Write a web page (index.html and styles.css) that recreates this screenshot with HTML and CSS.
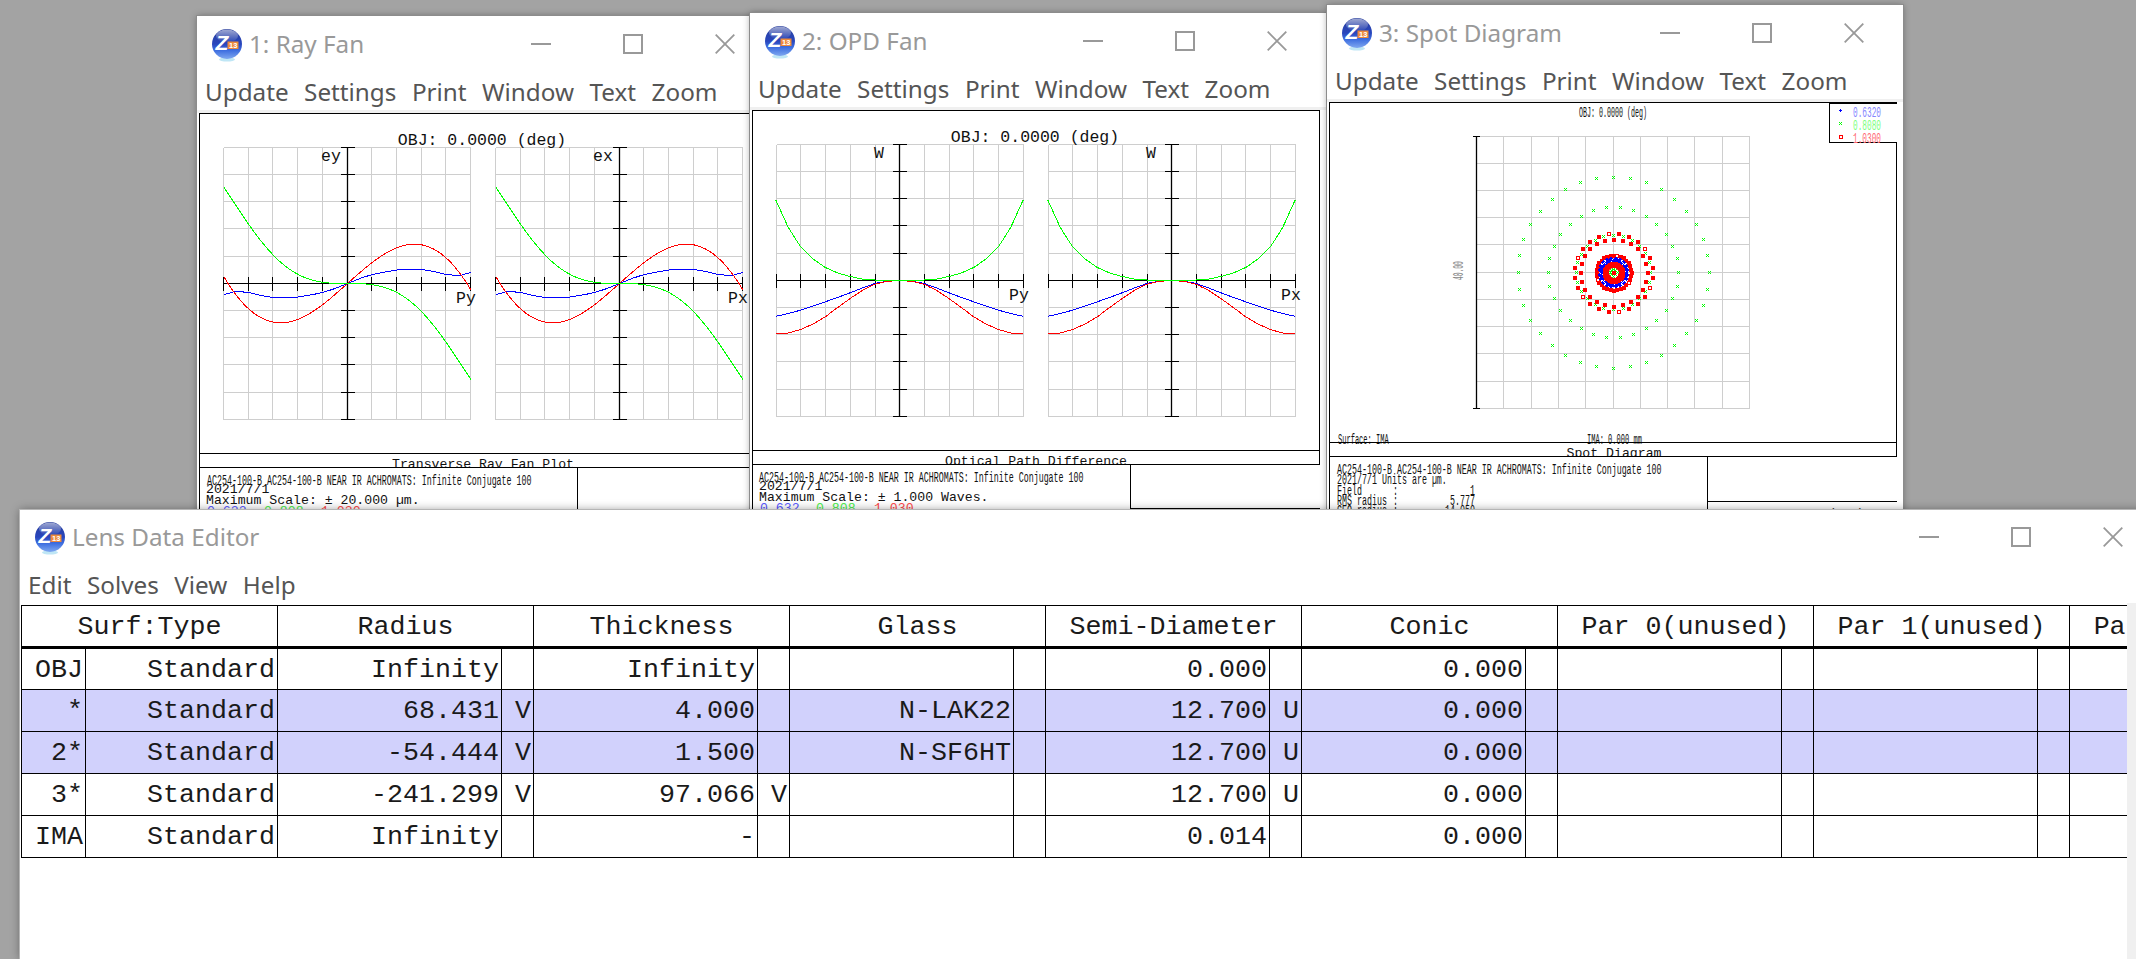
FILE: index.html
```html
<!DOCTYPE html>
<html lang="en">
<head>
<meta charset="utf-8">
<title>Zemax windows</title>
<link rel="stylesheet" href="styles.css">
</head>
<body>
<svg class="defs" width="0" height="0" aria-hidden="true">
  <defs>
    <linearGradient id="ballFill" x1="0" y1="0" x2="0" y2="1">
      <stop offset="0" stop-color="#2a3f9c"/>
      <stop offset=".5" stop-color="#2846bd"/>
      <stop offset=".72" stop-color="#3f6fe0"/>
      <stop offset="1" stop-color="#7fa8f0"/>
    </linearGradient>
    <linearGradient id="ballShine" x1="0" y1="0" x2="0" y2="1">
      <stop offset="0" stop-color="#fff" stop-opacity=".55"/>
      <stop offset="1" stop-color="#fff" stop-opacity="0"/>
    </linearGradient>
    <symbol id="zicon" viewBox="0 0 30 33">
      <ellipse cx="15" cy="30.5" rx="8" ry="2" fill="#bfe6f5"/>
      <circle cx="15" cy="15" r="15" fill="url(#ballFill)"/>
      <ellipse cx="15" cy="7" rx="11" ry="6.5" fill="url(#ballShine)"/>
      <rect x="15.5" y="12.5" width="11" height="7.5" fill="#ee8a3c"/>
      <text class="icon-z" x="3.5" y="20.5">Z</text>
      <text class="icon-n" x="17" y="19">13</text>
    </symbol>
    <symbol id="btn-min" viewBox="0 0 20 20"><path d="M0 10H20" fill="none" stroke="#999" stroke-width="2"/></symbol>
    <symbol id="btn-max" viewBox="0 0 20 20"><rect x="1" y="1" width="18" height="18" fill="none" stroke="#999" stroke-width="2"/></symbol>
    <symbol id="btn-close" viewBox="0 0 20 20"><path d="M.7 .7L19.3 19.3M19.3 .7L.7 19.3" fill="none" stroke="#999" stroke-width="1.8"/></symbol>
  </defs>
</svg>

<main class="desktop">

  <section class="window win-ray">
    <header class="titlebar">
      <svg class="app-icon"><use href="#zicon"/></svg>
      <span class="title">1: Ray Fan</span>
      <div class="controls">
        <span class="ctl"><svg class="ctl-icon"><use href="#btn-min"/></svg></span>
        <span class="ctl"><svg class="ctl-icon"><use href="#btn-max"/></svg></span>
        <span class="ctl"><svg class="ctl-icon"><use href="#btn-close"/></svg></span>
      </div>
    </header>
    <nav class="menubar"><span>Update</span><span>Settings</span><span>Print</span><span>Window</span><span>Text</span><span>Zoom</span></nav>
    <div class="plot">
      <svg class="chart" viewBox="200 114 567 410" id="chart-ray">
        <g class="gfx"></g>
        <text class="t-head" x="482" y="145" text-anchor="middle">OBJ: 0.0000 (deg)</text>
        <text class="t-head" x="321" y="161">ey</text>
        <text class="t-head" x="593" y="161">ex</text>
        <text class="t-head" x="456" y="303">Py</text>
        <text class="t-head" x="728" y="303">Px</text>
        <text class="t-body" x="483" y="468" text-anchor="middle">Transverse Ray Fan Plot</text>
        <g class="over"></g>
        <text class="t-narrow" transform="translate(207 485) scale(.555 1)">AC254-100-B AC254-100-B NEAR IR ACHROMATS: Infinite Conjugate 100</text>
        <text class="t-body" x="206" y="493">2021/7/1</text>
        <text class="t-body" x="206" y="504">Maximum Scale: ± 20.000 µm.</text>
        <text class="t-body c-blue" x="207" y="515">0.632</text>
        <text class="t-body c-green" x="264" y="515">0.808</text>
        <text class="t-body c-red" x="321" y="515">1.030</text>
      </svg>
    </div>
  </section>

  <section class="window win-opd">
    <header class="titlebar">
      <svg class="app-icon"><use href="#zicon"/></svg>
      <span class="title">2: OPD Fan</span>
      <div class="controls">
        <span class="ctl"><svg class="ctl-icon"><use href="#btn-min"/></svg></span>
        <span class="ctl"><svg class="ctl-icon"><use href="#btn-max"/></svg></span>
        <span class="ctl"><svg class="ctl-icon"><use href="#btn-close"/></svg></span>
      </div>
    </header>
    <nav class="menubar"><span>Update</span><span>Settings</span><span>Print</span><span>Window</span><span>Text</span><span>Zoom</span></nav>
    <div class="plot">
      <svg class="chart" viewBox="753 111 567 410" id="chart-opd">
        <g class="gfx"></g>
        <text class="t-head" x="1035" y="142" text-anchor="middle">OBJ: 0.0000 (deg)</text>
        <text class="t-head" x="874" y="158">W</text>
        <text class="t-head" x="1146" y="158">W</text>
        <text class="t-head" x="1009" y="300">Py</text>
        <text class="t-head" x="1281" y="300">Px</text>
        <text class="t-body" x="1036" y="465" text-anchor="middle">Optical Path Difference</text>
        <g class="over"></g>
        <text class="t-narrow" transform="translate(759 482) scale(.555 1)">AC254-100-B AC254-100-B NEAR IR ACHROMATS: Infinite Conjugate 100</text>
        <text class="t-body" x="759" y="490">2021/7/1</text>
        <text class="t-body" x="759" y="501">Maximum Scale: ± 1.000 Waves.</text>
        <text class="t-body c-blue" x="760" y="512">0.632</text>
        <text class="t-body c-green" x="816" y="512">0.808</text>
        <text class="t-body c-red" x="874" y="512">1.030</text>
      </svg>
    </div>
  </section>

  <section class="window win-spot">
    <header class="titlebar">
      <svg class="app-icon"><use href="#zicon"/></svg>
      <span class="title">3: Spot Diagram</span>
      <div class="controls">
        <span class="ctl"><svg class="ctl-icon"><use href="#btn-min"/></svg></span>
        <span class="ctl"><svg class="ctl-icon"><use href="#btn-max"/></svg></span>
        <span class="ctl"><svg class="ctl-icon"><use href="#btn-close"/></svg></span>
      </div>
    </header>
    <nav class="menubar"><span>Update</span><span>Settings</span><span>Print</span><span>Window</span><span>Text</span><span>Zoom</span></nav>
    <div class="plot">
      <svg class="chart" viewBox="1330 103 567 410" id="chart-spot">
        <g class="gfx"></g>
        <text class="t-narrow" transform="translate(1579 117) scale(.445 1)">OBJ: 0.0000 (deg)</text>
        <text class="t-narrow c-lblue" transform="translate(1853 117) scale(.52 1)">0.6320</text>
        <text class="t-narrow c-lgreen" transform="translate(1853 130) scale(.52 1)">0.8080</text>
        <text class="t-narrow c-lred" transform="translate(1853 143) scale(.52 1)">1.0300</text>
        <text class="t-narrow c-grey" transform="translate(1463 280) rotate(-90) scale(.42 .95)">40.00</text>
        <text class="t-narrow" transform="translate(1338 444) scale(.47 1)">Surface: IMA</text>
        <text class="t-narrow" transform="translate(1587 444) scale(.47 1)">IMA: 0.000 mm</text>
        <text class="t-body" x="1614" y="457" text-anchor="middle">Spot Diagram</text>
        <g class="over"></g>
        <text class="t-narrow" transform="translate(1337 474) scale(.555 1)">AC254-100-B AC254-100-B NEAR IR ACHROMATS: Infinite Conjugate 100</text>
        <text class="t-narrow" transform="translate(1337 484) scale(.555 1)">2021/7/1  Units are µm.</text>
        <text class="t-narrow" transform="translate(1337 495) scale(.555 1)">Field</text>
        <text class="t-narrow" transform="translate(1393 495) scale(.555 1)">:</text>
        <text class="t-narrow" transform="translate(1470 495) scale(.555 1)">1</text>
        <text class="t-narrow" transform="translate(1337 505) scale(.555 1)">RMS radius</text>
        <text class="t-narrow" transform="translate(1393 505) scale(.555 1)">:</text>
        <text class="t-narrow" transform="translate(1450 505) scale(.555 1)">5.777</text>
        <text class="t-narrow" transform="translate(1337 515) scale(.555 1)">GEO radius</text>
        <text class="t-narrow" transform="translate(1393 515) scale(.555 1)">:</text>
        <text class="t-narrow" transform="translate(1445 515) scale(.555 1)">14.050</text>
        <text class="t-small" x="1712" y="516">AC254-100-B_Zemax(ZMX).zmx</text>
      </svg>
    </div>
  </section>

  <section class="window win-lde">
    <header class="titlebar">
      <svg class="app-icon"><use href="#zicon"/></svg>
      <span class="title">Lens Data Editor</span>
      <div class="controls">
        <span class="ctl"><svg class="ctl-icon"><use href="#btn-min"/></svg></span>
        <span class="ctl"><svg class="ctl-icon"><use href="#btn-max"/></svg></span>
        <span class="ctl"><svg class="ctl-icon"><use href="#btn-close"/></svg></span>
      </div>
    </header>
    <nav class="menubar menubar-lde"><span>Edit</span><span>Solves</span><span>View</span><span>Help</span></nav>
    <div class="lde-body">
      <div class="table-clip">
        <table class="lens">
          <colgroup>
            <col class="c-no"><col class="c-type">
            <col class="c-val"><col class="c-sol"><col class="c-val"><col class="c-sol">
            <col class="c-val"><col class="c-sol"><col class="c-val"><col class="c-sol">
            <col class="c-val"><col class="c-sol"><col class="c-val"><col class="c-sol">
            <col class="c-val"><col class="c-sol"><col class="c-val"><col class="c-sol">
          </colgroup>
          <thead>
            <tr>
              <th colspan="2">Surf:Type</th><th colspan="2">Radius</th><th colspan="2">Thickness</th>
              <th colspan="2">Glass</th><th colspan="2">Semi-Diameter</th><th colspan="2">Conic</th>
              <th colspan="2">Par 0(unused)</th><th colspan="2">Par 1(unused)</th><th colspan="2">Par 2(unused)</th>
            </tr>
          </thead>
          <tbody>
            <tr>
              <td>OBJ</td><td>Standard</td><td>Infinity</td><td></td><td>Infinity</td><td></td><td></td><td></td>
              <td>0.000</td><td></td><td>0.000</td><td></td><td></td><td></td><td></td><td></td><td></td><td></td>
            </tr>
            <tr class="sel">
              <td>*</td><td>Standard</td><td>68.431</td><td>V</td><td>4.000</td><td></td><td>N-LAK22</td><td></td>
              <td>12.700</td><td>U</td><td>0.000</td><td></td><td></td><td></td><td></td><td></td><td></td><td></td>
            </tr>
            <tr class="sel">
              <td>2*</td><td>Standard</td><td>-54.444</td><td>V</td><td>1.500</td><td></td><td>N-SF6HT</td><td></td>
              <td>12.700</td><td>U</td><td>0.000</td><td></td><td></td><td></td><td></td><td></td><td></td><td></td>
            </tr>
            <tr>
              <td>3*</td><td>Standard</td><td>-241.299</td><td>V</td><td>97.066</td><td>V</td><td></td><td></td>
              <td>12.700</td><td>U</td><td>0.000</td><td></td><td></td><td></td><td></td><td></td><td></td><td></td>
            </tr>
            <tr>
              <td>IMA</td><td>Standard</td><td>Infinity</td><td></td><td>-</td><td></td><td></td><td></td>
              <td>0.014</td><td></td><td>0.000</td><td></td><td></td><td></td><td></td><td></td><td></td><td></td>
            </tr>
          </tbody>
        </table>
      </div>
      <div class="side-strip"></div>
    </div>
  </section>

</main>
<script src="charts.js"></script>
</body>
</html>
```
FILE: styles.css
```css
* { box-sizing: border-box; }

html, body {
  margin: 0;
  height: 100%;
  overflow: hidden;
  background: #a3a3a3;
}

.defs { position: absolute; }

.desktop {
  position: relative;
  width: 2136px;
  height: 959px;
  overflow: hidden;
}

/* desktop windows */
.window {
  position: absolute;
  display: flex;
  flex-direction: column;
  background: #fff;
  box-shadow: 0 0 0 1px #8c8c8c, 0 0 7px rgba(0, 0, 0, .35);
}

.win-ray  { left: 197px;  top: 16px; width: 577px; height: 510px; }
.win-opd  { left: 750px;  top: 13px; width: 576px; height: 510px; }
.win-spot { left: 1327px; top: 5px;  width: 576px; height: 510px; }
.win-lde  { left: 20px;   top: 510px; width: 2142px; height: 449px; box-shadow: 0 0 0 1px #b5b5b5, 0 0 9px rgba(0, 0, 0, .4); }

.titlebar {
  display: flex;
  align-items: center;
  flex: none;
  height: 56px;
  padding-left: 15px;
}

.win-lde .titlebar { height: 54px; }

.app-icon {
  flex: none;
  width: 30px;
  height: 33px;
  margin-top: 3px;
  margin-right: 7px;
}

.title {
  font: 24.25px/1 "Noto Sans", sans-serif;
  color: #999;
}

.controls {
  display: flex;
  margin-left: auto;
  padding-right: 3px;
}

.ctl {
  display: flex;
  align-items: center;
  justify-content: center;
  width: 92px;
}

.ctl-icon { width: 20px; height: 20px; }

.menubar {
  display: flex;
  flex: none;
  gap: 15.5px;
  height: 41px;
  padding-left: 8px;
  border-bottom: 3px solid #f0f0f0;
  font: 24.25px/39px "Noto Sans", sans-serif;
  color: #555;
}

.menubar-lde {
  height: 39px;
  border-bottom: 0;
  line-height: 41px;
}

/* analysis plot area */
.plot {
  flex: 1;
  margin: 0 6px 0 2px;
  border: 1px solid #000;
  min-height: 0;
}

.chart { display: block; width: 567px; height: 410px; }

.chart text { font-family: "Liberation Mono", monospace; fill: #111; }
.t-head { font-size: 16.5px; }
.t-body { font-size: 13.2px; }
.t-narrow { font-size: 15px; }
.t-small { font-size: 11.5px; }

.chart .c-blue { fill: #5a5aff; }
.chart .c-green { fill: #50f050; }
.chart .c-red { fill: #ff4a4a; }
.chart .c-lblue { fill: #8585ff; }
.chart .c-lgreen { fill: #80ff80; }
.chart .c-lred { fill: #ff6a75; }
.chart .c-grey { fill: #888; }

.icon-z { font: italic 700 21px "Liberation Sans", sans-serif; fill: #fff; }
.icon-n { font: 700 7.5px "Liberation Sans", sans-serif; fill: #fff; }

/* lens data editor */
.lde-body {
  display: flex;
  flex: 1;
  min-height: 0;
}

.table-clip {
  flex: none;
  width: 2106px;
  margin-left: 1px;
  padding-top: 2px;
  overflow: hidden;
}

.side-strip { flex: 1; background: #f0f0f0; }

.lens {
  table-layout: fixed;
  width: 2305px;
  border-collapse: collapse;
  font: 26.67px/1 "Liberation Mono", monospace;
  color: #1a1a1a;
}

.c-no { width: 64px; }
.c-type { width: 192px; }
.c-val { width: 224px; }
.c-sol { width: 32px; }

.lens th, .lens td {
  height: 42px;
  padding: 2px 0 0;
  border: 1px solid #000;
  white-space: nowrap;
  overflow: hidden;
}

.lens th {
  font-weight: 400;
  text-align: center;
  border-bottom: 3px solid #000;
}

.lens td {
  padding-right: 2px;
  text-align: right;
}

.lens .sel td { background: #d1d1fc; }
```
FILE: charts.js
```js
// Draws the grids, axes, curves and spot markers of the three analysis plots.
const NS = 'http://www.w3.org/2000/svg';

function el(parent, tag, attrs) {
  const node = document.createElementNS(NS, tag);
  for (const k in attrs) node.setAttribute(k, attrs[k]);
  parent.appendChild(node);
  return node;
}
const snap = v => Math.floor(v) + 0.5;
function line(g, x1, y1, x2, y2, stroke) {
  el(g, 'line', { x1: x1, y1: y1, x2: x2, y2: y2, stroke: stroke || '#000', 'stroke-width': 1, 'shape-rendering': 'crispEdges' });
}

function fanFrame(g, left, yTop, w, h, axisCol, axisRow) {
  for (let i = 0; i <= 10; i++) {
    const x = snap(left + w * i / 10);
    const y = snap(yTop + h * i / 10);
    line(g, x, snap(yTop), x, snap(yTop + h), '#cecece');
    line(g, snap(left), y, snap(left + w), y, '#cecece');
  }
  const ax = snap(left + w * axisCol / 10);
  const ay = snap(yTop + h * axisRow / 10);
  el(g, 'line', { x1: ax, y1: snap(yTop), x2: ax, y2: snap(yTop + h), stroke: '#000', 'stroke-width': 1.3 });
  line(g, snap(left), ay, snap(left + w), ay);
  for (let i = 0; i <= 10; i++) {
    const x = snap(left + w * i / 10);
    const y = snap(yTop + h * i / 10);
    line(g, x, ay - 7, x, ay + 7);
    line(g, ax - 7, y, ax + 7, y);
  }
  return { ax: ax, ay: ay };
}

function curve(g, fn, ax, ay, halfW, color) {
  let pts = '';
  for (let i = -40; i <= 40; i++) {
    const u = i / 40;
    pts += (ax + u * halfW).toFixed(1) + ',' + (ay - fn(u)).toFixed(1) + ' ';
  }
  el(g, 'polyline', { points: pts, fill: 'none', stroke: color, 'stroke-width': 1, 'shape-rendering': 'crispEdges' });
}

// linear interpolation in a table sampled at |u| = 0, .1, ... 1
function table(vals) {
  return a => {
    const t = Math.min(Math.abs(a), 1) * 10;
    const i = Math.min(Math.floor(t), 9);
    return vals[i] + (vals[i + 1] - vals[i]) * (t - i);
  };
}

function raySet(g, left, yTop) {
  const f = fanFrame(g, left, yTop, 247.2, 272, 5, 5);
  const half = 123.6;
  const blue = table([0, 5, 9, 11.5, 13.5, 14, 14, 12, 9, 7.7, 11]);
  curve(g, u => Math.sign(u) * blue(u), f.ax, f.ay, half, '#00f');
  curve(g, u => 110.3 * u - 133.3 * u ** 3 + 16.3 * u ** 5, f.ax, f.ay, half, '#f00');
  curve(g, u => -(150.7 * u ** 3 - 54.7 * u ** 5), f.ax, f.ay, half, '#0f0');
}

function opdSet(g, left, yTop) {
  const f = fanFrame(g, left, yTop, 247.2, 272, 5, 5);
  const half = 123.6;
  curve(g, table([0, -.8, -3, -7.5, -12.3, -17, -21.3, -25.5, -29.7, -33, -35.7]), f.ax, f.ay, half, '#00f');
  curve(g, table([0, -.8, -3.7, -10, -18, -27, -36.3, -43.5, -49, -52.5, -53]), f.ax, f.ay, half, '#f00');
  curve(g, table([0, 0, .5, 1.5, 4, 7.5, 13, 21.5, 33.7, 53, 80.3]), f.ax, f.ay, half, '#0f0');
}

// Footer of a plot: white block under the title strip hides title descenders.
function footer(g, x0, x1, yA, yB, xV) {
  el(g, 'rect', { x: x0, y: snap(yB), width: x1 - x0, height: 80, fill: '#fff' });
  line(g, x0, snap(yA), x1, snap(yA));
  line(g, x0, snap(yB), x1, snap(yB));
  line(g, snap(xV), snap(yB), snap(xV), 530);
}

// Ray fan
{
  const root = document.querySelector('#chart-ray');
  const g = root.querySelector('.gfx');
  raySet(g, 223.5, 147.3);
  raySet(g, 495.5, 147.3);
  footer(root.querySelector('.over'), 200, 768, 453.3, 467.3, 577.6);
}

// OPD fan
{
  const root = document.querySelector('#chart-opd');
  const g = root.querySelector('.gfx');
  const over = root.querySelector('.over');
  opdSet(g, 776.2, 144.3);
  opdSet(g, 1048.2, 144.3);
  footer(over, 753, 1321, 450.3, 464.3, 1130.6);
  line(over, snap(1130.6), 508.5, 1321, 508.5);
}

// Spot diagram markers
function green(g, x, y) {
  el(g, 'path', { d: `M${x - 1.5} ${y - 1.5}l3 3m0 -3l-3 3`, stroke: '#0f0', 'stroke-width': 1, fill: 'none', 'shape-rendering': 'crispEdges' });
}
function red(g, x, y, hollow) {
  if (hollow) el(g, 'rect', { x: x - 1.5, y: y - 1.5, width: 3, height: 3, fill: '#fff', stroke: '#f00', 'stroke-width': 1, 'shape-rendering': 'crispEdges' });
  else el(g, 'rect', { x: x - 2, y: y - 2, width: 4, height: 4, fill: '#f00', 'shape-rendering': 'crispEdges' });
}
function blue(g, x, y) {
  el(g, 'path', { d: `M${x - 1.5} ${y}h3M${x} ${y - 1.5}v3`, stroke: '#00f', 'stroke-width': 1, fill: 'none', 'shape-rendering': 'crispEdges' });
}
const cx = 1613, cy = 272;
function ring(n, r, offsetDeg, fn) {
  for (let i = 0; i < n; i++) {
    const a = (offsetDeg + i * 360 / n) * Math.PI / 180;
    fn(Math.round(cx + r * Math.cos(a)) + .5, Math.round(cy + r * Math.sin(a)) + .5, i);
  }
}
{
  const root = document.querySelector('#chart-spot');
  const g = root.querySelector('.gfx');
  // grid
  const left = 1476.6, top = 136, w = 272.8, h = 272.3;
  for (let i = 0; i <= 10; i++) {
    const x = snap(left + w * i / 10);
    const y = snap(top + h * i / 10);
    line(g, x, snap(top), x, snap(top + h), '#cecece');
    line(g, snap(left), y, snap(left + w), y, '#cecece');
  }
  el(g, 'line', { x1: snap(left), y1: snap(top), x2: snap(left), y2: snap(top + h), stroke: '#000', 'stroke-width': 1.3 });
  line(g, snap(left) - 4, snap(top), snap(left) + 3, snap(top));
  line(g, snap(left) - 4, snap(top + h), snap(left) + 3, snap(top + h));

  // spots, outermost green first
  ring(36, 95.5, 0, (x, y) => green(g, x, y));
  ring(30, 65, 0, (x, y) => green(g, x, y));
  ring(24, 37, 0, (x, y) => green(g, x, y));
  ring(24, 39, 7.5, (x, y, i) => red(g, x, y, i % 4 === 1));
  ring(24, 33.5, 0, (x, y) => red(g, x, y, false));
  ring(32, 17.5, 0, (x, y, i) => red(g, x, y, i % 11 === 3));
  for (let a = 0; a < 60; a++) {
    for (const r of [10.5, 12.5, 14.5]) {
      const t = a * 6 * Math.PI / 180;
      if ((a + Math.round(r)) % 3) blue(g, Math.round(cx + r * Math.cos(t)) + .5, Math.round(cy + r * Math.sin(t)) + .5);
    }
  }
  ring(30, 7, 0, (x, y) => red(g, x, y, false));
  ring(30, 9, 6, (x, y) => red(g, x, y, false));
  el(g, 'circle', { cx: cx + .5, cy: cy + .5, r: 4.5, fill: '#fff' });
  ring(8, 3.5, 0, (x, y) => green(g, x, y));
  red(g, cx + .5, cy + .5, false);

  // legend
  const lx = snap(1829), ly = snap(142.3);
  el(g, 'rect', { x: lx, y: 103, width: 80, height: ly - 103, fill: '#fff', stroke: '#000', 'stroke-width': 1, 'shape-rendering': 'crispEdges' });
  blue(g, 1840.5, 110.5);
  green(g, 1840.5, 123.5);
  red(g, 1840.5, 136.5, true);

  // footer
  const over = root.querySelector('.over');
  footer(over, 1330, 1897, 442.3, 456.7, 1707);
  line(over, snap(1707), snap(501.3), 1897, snap(501.3));
}
```
